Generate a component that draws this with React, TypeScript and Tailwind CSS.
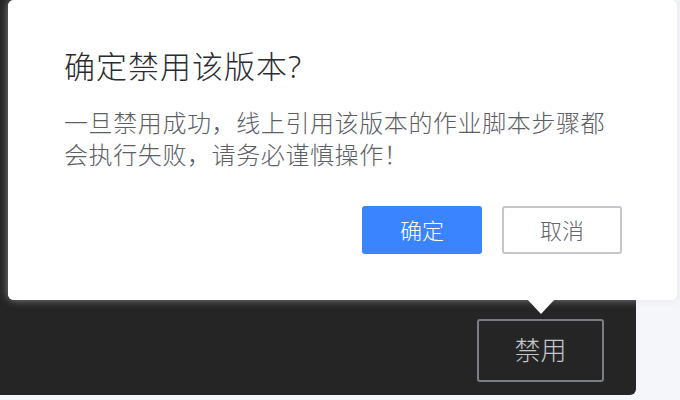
export default function App() {
  return (
    <div className="relative h-[400px] w-[680px] overflow-hidden bg-[#f5f6fa] font-['Noto_Sans','Noto_Sans_CJK_SC',sans-serif]">
      {/* dark table panel behind the popover */}
      <div className="flex h-[395px] w-[636px] justify-end rounded-br-md bg-[#252525] pr-[32px] pt-[319px]">
        <button
          type="button"
          className="flex h-[63px] w-[127px] items-center justify-center rounded-[3px] border-2 border-[#7c7e85] text-[26px] font-light text-[#c4c6cc]"
        >
          禁用
        </button>
      </div>

      {/* confirm popover */}
      <div className="absolute left-[8px] top-0 h-[300px] w-[669px] rounded-md bg-white shadow-[0_0_8px_rgba(210,212,220,0.55)]">
        <svg className="absolute left-[519px] top-[299px]" width="28" height="16" viewBox="0 0 28 16">
          <polygon points="0,0 28,0 14,15" fill="#ffffff" />
        </svg>
        <div className="relative flex h-full flex-col rounded-md bg-white pl-[56px] pr-[55px] pt-[46px]">
          <h2 className="text-[31px] font-light leading-[40px] tracking-[1px] text-[#2b2c31]">确定禁用该版本?</h2>
          <p className="mt-[21px] text-[24px] font-light leading-[32px] tracking-[0.6px] text-[#5c5e66]">
            一旦禁用成功，线上引用该版本的作业脚本步骤都
            <br />
            会执行失败，请务必谨慎操作！
          </p>
          <div className="mt-[35px] flex justify-end gap-[20px]">
            <button
              type="button"
              className="flex h-[48px] w-[120px] items-center justify-center rounded-[3px] bg-[#3a84ff] text-[22px] font-light text-white"
            >
              确定
            </button>
            <button
              type="button"
              className="flex h-[48px] w-[120px] items-center justify-center rounded-[3px] border-2 border-[#c4c6cc] bg-white text-[22px] font-light text-[#63656e]"
            >
              取消
            </button>
          </div>
        </div>
      </div>
    </div>
  );
}
